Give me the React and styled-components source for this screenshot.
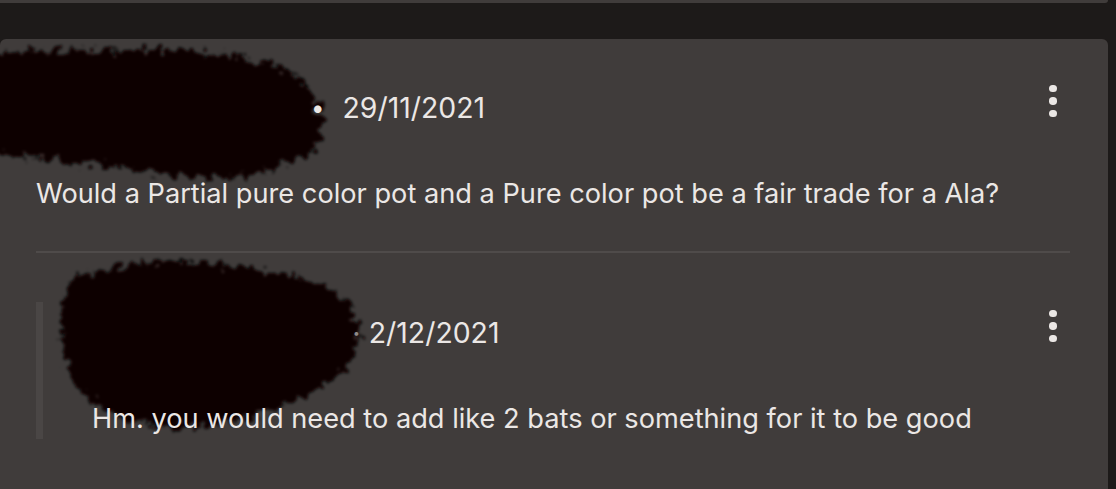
import React from "react";
import styled, { createGlobalStyle } from "styled-components";

const Global = createGlobalStyle`
  html, body {
    margin: 0;
    padding: 0;
    background: #1d1a19;
    height: 100%;
    overflow: hidden;
  }
  #root {
    font-family: Inter, "Noto Sans", sans-serif;
    color: #ebe7e5;
  }
`;

const PrevCard = styled.div`
  height: 3px;
  margin-right: 8px;
  background: #403c3b;
  border-radius: 0 0 6px 0;
`;

const Card = styled.section`
  margin-top: 36px;
  margin-right: 8px;
  height: 460px;
  background: #403c3b;
  border-radius: 6px;
  padding: 40px 38px 0 36px;
  box-sizing: border-box;
`;

const Header = styled.div`
  display: flex;
  align-items: center;
  height: ${(p) => p.$h}px;
`;

const UserWrap = styled.span`
  position: relative;
  display: inline-block;
  width: ${(p) => p.$w}px;
  height: 30px;
`;

const Redact = styled.svg`
  position: absolute;
  left: ${(p) => p.$x}px;
  top: ${(p) => p.$y}px;
  overflow: visible;
`;

const Dot = styled.span`
  font-size: ${(p) => (p.$small ? 12 : 24)}px;
  color: ${(p) => (p.$small ? "#8f8a88" : "#ebe7e5")};
  margin: 0 ${(p) => (p.$small ? 9 : 18)}px 0 ${(p) => (p.$small ? 6 : 3)}px;
  position: relative;
  z-index: 1;
`;

const Date = styled.span`
  font-size: 28.4px;
`;

const Kebab = styled.button`
  margin-left: auto;
  margin-right: 7px;
  margin-bottom: ${(p) => p.$mb}px;
  background: none;
  border: 0;
  padding: 0;
  width: 20px;
  display: flex;
  flex-direction: column;
  align-items: center;
  gap: 5px;
  span {
    width: 7.5px;
    height: 7.5px;
    border-radius: 50%;
    background: #ebe7e5;
  }
`;

const Text = styled.p`
  margin: ${(p) => p.$mt}px 0 0;
  font-size: 27.2px;
  line-height: 39px;
  white-space: nowrap;
  position: relative;
`;

const Divider = styled.hr`
  margin: 38px 0 0;
  border: 0;
  height: 2px;
  background: #4f4b4a;
`;

const Reply = styled.div`
  display: flex;
  margin-top: 49px;
`;

const Bar = styled.div`
  width: 7px;
  height: 137px;
  background: #4a4645;
  flex: none;
`;

const ReplyBody = styled.div`
  flex: 1;
  padding-left: 49px;
`;

function Blob({ id, d, x, y, w, h }) {
  return (
    <Redact $x={x} $y={y} width={w} height={h} viewBox={`0 0 ${w} ${h}`}>
      <defs>
        <filter id={id} x="-10%" y="-20%" width="120%" height="140%">
          <feTurbulence type="fractalNoise" baseFrequency="0.12" numOctaves="4" seed="7" result="n" />
          <feDisplacementMap in="SourceGraphic" in2="n" scale="22" xChannelSelector="R" yChannelSelector="G" />
          <feGaussianBlur stdDeviation="1.6" />
        </filter>
      </defs>
      <path d={d} fill="#070505" filter={`url(#${id})`} />
    </Redact>
  );
}

function Menu({ mb }) {
  return (
    <Kebab $mb={mb} aria-label="more">
      <span />
      <span />
      <span />
    </Kebab>
  );
}

export default function App() {
  return (
    <>
      <Global />
      <PrevCard />
      <Card>
        <Header $h={56}>
          <UserWrap $w={272}>
            <Blob
              id="r1"
              x={-50}
              y={-50}
              w={350}
              h={150}
              d="M0 14 C40 6 100 10 150 8 C200 4 250 14 285 22 C320 34 334 56 336 78 C338 98 330 108 318 114 C290 128 270 136 240 136 C200 136 160 130 120 124 C80 120 40 116 14 110 C4 106 0 102 0 96 Z"
            />
          </UserWrap>
          <Dot>•</Dot>
          <Date>29/11/2021</Date>
          <Menu mb={12} />
        </Header>
        <Text $mt={39}>
          Would a Partial pure color pot and a Pure color pot be a fair trade for a Ala?
        </Text>
        <Divider />
        <Reply>
          <Bar />
          <ReplyBody>
            <Header $h={60}>
              <UserWrap $w={255}>
                <Blob
                  id="r2"
                  x={-46}
                  y={-58}
                  w={320}
                  h={180}
                  d="M28 18 C60 8 110 0 160 4 C210 8 262 16 292 34 C314 50 316 74 308 94 C298 118 272 134 240 146 C200 162 150 172 110 166 C70 160 38 146 26 118 C12 88 10 40 28 18 Z"
                />
              </UserWrap>
              <Dot $small>•</Dot>
              <Date>2/12/2021</Date>
              <Menu mb={12} />
            </Header>
            <Text $mt={37}>Hm. you would need to add like 2 bats or something for it to be good</Text>
          </ReplyBody>
        </Reply>
      </Card>
    </>
  );
}
